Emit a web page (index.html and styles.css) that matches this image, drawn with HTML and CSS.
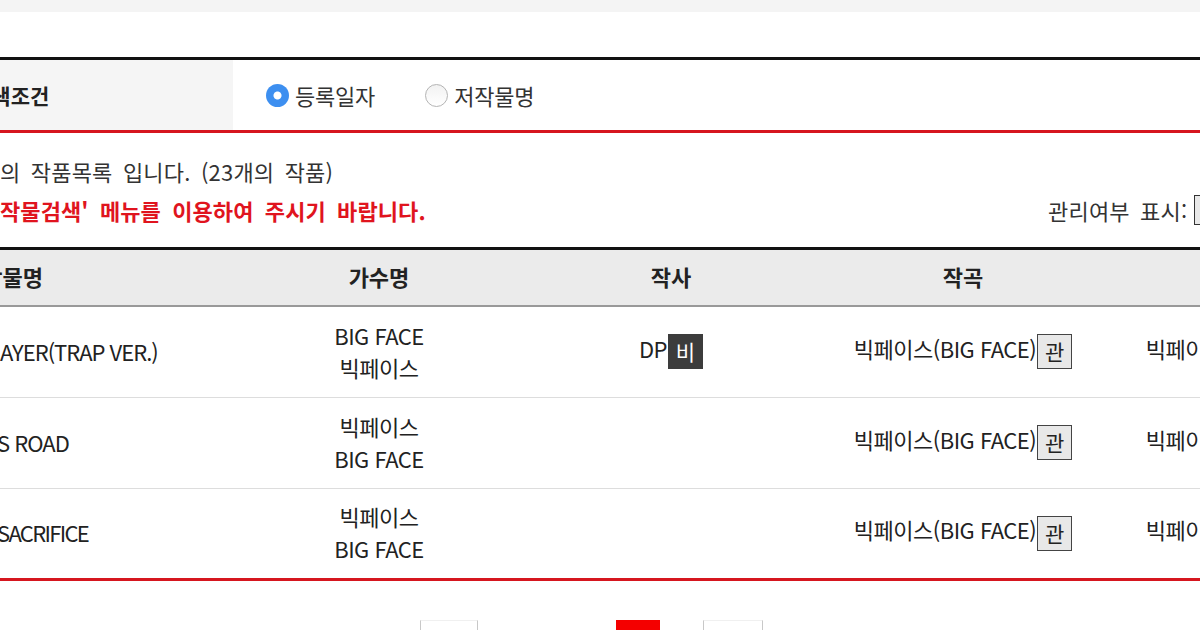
FILE: index.html
```html
<!DOCTYPE html>
<html lang="ko">
<head>
<meta charset="utf-8">
<title>작품목록</title>
<link rel="stylesheet" href="styles.css">
</head>
<body>
<div class="topbar"></div>
<div class="page">
  <div class="search">
    <div class="search-label">검색조건</div>
    <div class="search-options">
      <label class="radio"><span class="dot dot-on"></span>등록일자</label>
      <label class="radio"><span class="dot"></span>저작물명</label>
    </div>
  </div>

  <div class="info">
    <p class="count">의 작품목록 입니다. (23개의 작품)</p>
    <div class="notice-row">
      <p class="notice">작물검색' 메뉴를 이용하여 주시기 바랍니다.</p>
      <div class="legend">관리여부 표시:<span class="legend-box"></span></div>
    </div>
  </div>

  <table class="works">
    <thead>
      <tr>
        <th class="col-title">저작물명</th>
        <th>가수명</th>
        <th>작사</th>
        <th>작곡</th>
        <th>편곡</th>
      </tr>
    </thead>
    <tbody>
      <tr>
        <td class="col-title"><span class="title t1">AYER(TRAP VER.)</span></td>
        <td>BIG FACE<br>빅페이스</td>
        <td>DP<span class="tag tag-dark">비</span></td>
        <td>빅페이스(BIG FACE)<span class="tag">관</span></td>
        <td>빅페이스(BIG FACE)<span class="tag">관</span></td>
      </tr>
      <tr>
        <td class="col-title"><span class="title t2">S ROAD</span></td>
        <td>빅페이스<br>BIG FACE</td>
        <td></td>
        <td>빅페이스(BIG FACE)<span class="tag">관</span></td>
        <td>빅페이스(BIG FACE)<span class="tag">관</span></td>
      </tr>
      <tr class="last">
        <td class="col-title"><span class="title t3">SACRIFICE</span></td>
        <td>빅페이스<br>BIG FACE</td>
        <td></td>
        <td>빅페이스(BIG FACE)<span class="tag">관</span></td>
        <td>빅페이스(BIG FACE)<span class="tag">관</span></td>
      </tr>
    </tbody>
  </table>

  <div class="paging">
    <span class="pg pg-first"></span>
    <span class="pg pg-current"></span>
    <span class="pg pg-next"></span>
  </div>
</div>
</body>
</html>
```

FILE: styles.css
```css
html, body {
  margin: 0;
  padding: 0;
  background: #fff;
}
body {
  width: 1200px;
  height: 630px;
  overflow: hidden;
  font-family: "Noto Sans CJK KR", "Noto Sans", sans-serif;
  color: #333;
}
.topbar {
  height: 12px;
  background: #f4f4f4;
}
.page {
  width: 1460px;
  margin-left: -59px;
  padding-top: 45px;
}

/* search condition */
.search {
  display: flex;
  height: 70px;
  border-top: 3px solid #111;
  border-bottom: 3px solid #d6161f;
}
.search-label {
  width: 292px;
  box-sizing: border-box;
  padding-left: 31px;
  background: #f5f5f5;
  display: flex;
  align-items: center;
  font-size: 21px;
  font-weight: 700;
  color: #222;
}
.search-options {
  display: flex;
  align-items: center;
  gap: 50px;
  padding-left: 33px;
  font-size: 22px;
  letter-spacing: -0.2px;
  color: #333;
}
.radio {
  display: flex;
  align-items: center;
  gap: 6px;
}
.dot {
  width: 23px;
  height: 23px;
  box-sizing: border-box;
  border-radius: 50%;
  border: 1px solid #b4b4b4;
  background: linear-gradient(#f2f2f2, #fff);
}
.dot-on {
  border: none;
  background: radial-gradient(circle, #fff 0 3.5px, #3d8ff0 4.5px);
}

/* info */
.info {
  padding: 23px 0 0 59px;
  font-size: 22px;
  line-height: 30px;
}
.info p {
  margin: 0;
}
.count {
  color: #333;
  word-spacing: 4px;
  letter-spacing: 0.2px;
}
.notice-row {
  display: flex;
  margin-top: 9px;
  height: 30px;
}
.notice {
  flex: 1;
  color: #e0141e;
  font-weight: 700;
  word-spacing: 5px;
  letter-spacing: 0.1px;
}
.legend {
  width: 353px;
  display: flex;
  align-items: center;
  color: #333;
  word-spacing: 4px;
  letter-spacing: 0.2px;
}
.legend-box {
  display: inline-block;
  width: 32px;
  height: 30px;
  box-sizing: border-box;
  margin-left: 7px;
  border: 1px solid #333;
  background: #e8e8e8;
}

/* table */
.works {
  width: 1460px;
  table-layout: fixed;
  border-collapse: separate;
  border-spacing: 0;
  margin-top: 22px;
  font-size: 22px;
  color: #222;
}
.works th {
  height: 52px;
  padding: 0 0 3px;
  background: #ebebeb;
  border-top: 3px solid #111;
  border-bottom: 2px solid #999;
  font-weight: 700;
  text-align: center;
  vertical-align: middle;
}
.works th.col-title {
  text-align: left;
  padding-left: 21px;
}
.works td {
  height: 87px;
  padding: 0 0 3px;
  border-bottom: 1px solid #ddd;
  text-align: center;
  vertical-align: middle;
  line-height: 32px;
  letter-spacing: -0.5px;
  white-space: nowrap;
}
.works tr.last td {
  height: 86px;
  border-bottom: 3px solid #d6161f;
}
.works td.col-title {
  text-align: left;
  padding-left: 59px;
}
.title {
  display: inline-block;
  letter-spacing: -1px;
}
.t2 {
  margin-left: -3px;
}
.t3 {
  margin-left: -3px;
  letter-spacing: -1.7px;
}
.tag {
  display: inline-block;
  width: 35px;
  height: 35px;
  box-sizing: border-box;
  margin-left: 1px;
  border: 1px solid #444;
  background: #e8e8e8;
  font-size: 21px;
  line-height: 33px;
  text-align: center;
  vertical-align: middle;
  letter-spacing: 0;
  color: #222;
}
.tag-dark {
  border-color: #3c3c3c;
  background: #3c3c3c;
  color: #fff;
}

/* paging */
.paging {
  display: flex;
  margin-top: 39px;
  padding-left: 479px;
  height: 44px;
}
.pg {
  display: block;
  height: 44px;
  box-sizing: border-box;
}
.pg-first,
.pg-next {
  width: 58px;
  border-left: 1px solid #c8c8c8;
  border-right: 1px solid #c8c8c8;
  border-top: 1px solid #f0f0f0;
}
.pg-current {
  width: 44px;
  margin-left: 138px;
  background: #f40000;
}
.pg-next {
  margin-left: 43px;
  width: 60px;
}
```
